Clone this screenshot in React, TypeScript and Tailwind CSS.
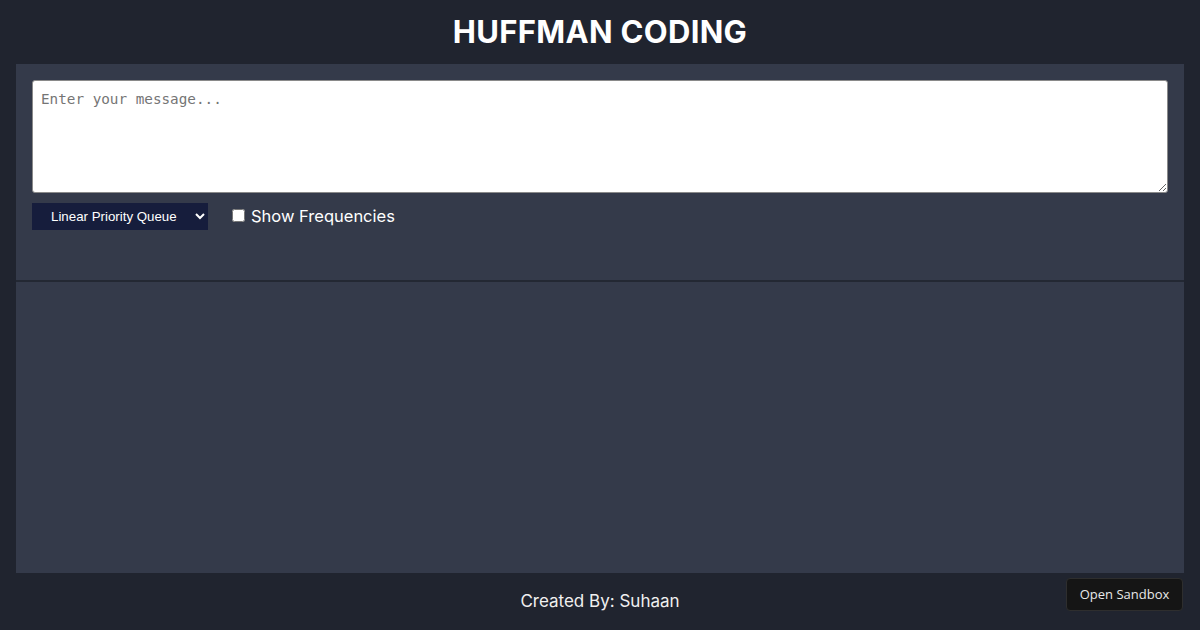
import { useState } from "react";

const poppins = { fontFamily: "Poppins, Inter, 'Noto Sans', sans-serif" };

export default function App() {
	const [message, setMessage] = useState("");
	const [showFreq, setShowFreq] = useState(false);

	return (
		<div
			className="relative flex h-[630px] w-[1200px] flex-col bg-[#20242f] text-white"
			style={poppins}
		>
			<header className="flex h-16 items-center justify-center">
				<h1 className="text-[31px] font-bold tracking-[0.01em] font-['Inter',sans-serif]">
					HUFFMAN CODING
				</h1>
			</header>

			<main className="mx-4 flex h-[509px] flex-col bg-[#343a4a]">
				<section className="flex h-[216px] flex-col gap-[10px] p-4">
					<textarea
						value={message}
						onChange={(e) => setMessage(e.target.value)}
						placeholder="Enter your message..."
						className="h-[113px] w-full resize-y rounded-[3px] border border-[#8a8a8a] bg-white px-2 pt-[8px] font-['DejaVu_Sans_Mono',monospace] text-[14.3px] text-black placeholder:text-[#757575] outline-none"
					/>
					<div className="flex items-center gap-6">
						<select className="h-[27px] w-[176px] bg-[#161d3c] pl-[15px] pr-[2px] font-['Liberation_Sans',Arial,sans-serif] text-[13.3px] text-white outline-none">
							<option>Linear Priority Queue</option>
							<option>Heap Priority Queue</option>
						</select>
						<label className="flex items-center gap-[6px] font-['Inter',sans-serif] text-[16.5px]">
							<input
								type="checkbox"
								checked={showFreq}
								onChange={(e) => setShowFreq(e.target.checked)}
								className="-mt-[3px] h-[13px] w-[13px]"
							/>
							Show Frequencies
						</label>
					</div>
				</section>
				<div className="h-[2px] bg-[#232833]" />
				<section className="flex-1" />
			</main>

			<footer className="flex flex-1 items-center justify-center">
				<p className="font-['Inter',sans-serif] text-[17px] text-[#f0f0f0]">
					Created By: Suhaan
				</p>
			</footer>

			<button className="absolute right-[17px] bottom-[19px] h-[33px] w-[117px] rounded-[4px] border border-[#2e2e2e] bg-[#151515] font-['Open_Sans',sans-serif] text-[13px] text-[#e8e8e8]">
				Open Sandbox
			</button>
		</div>
	);
}
